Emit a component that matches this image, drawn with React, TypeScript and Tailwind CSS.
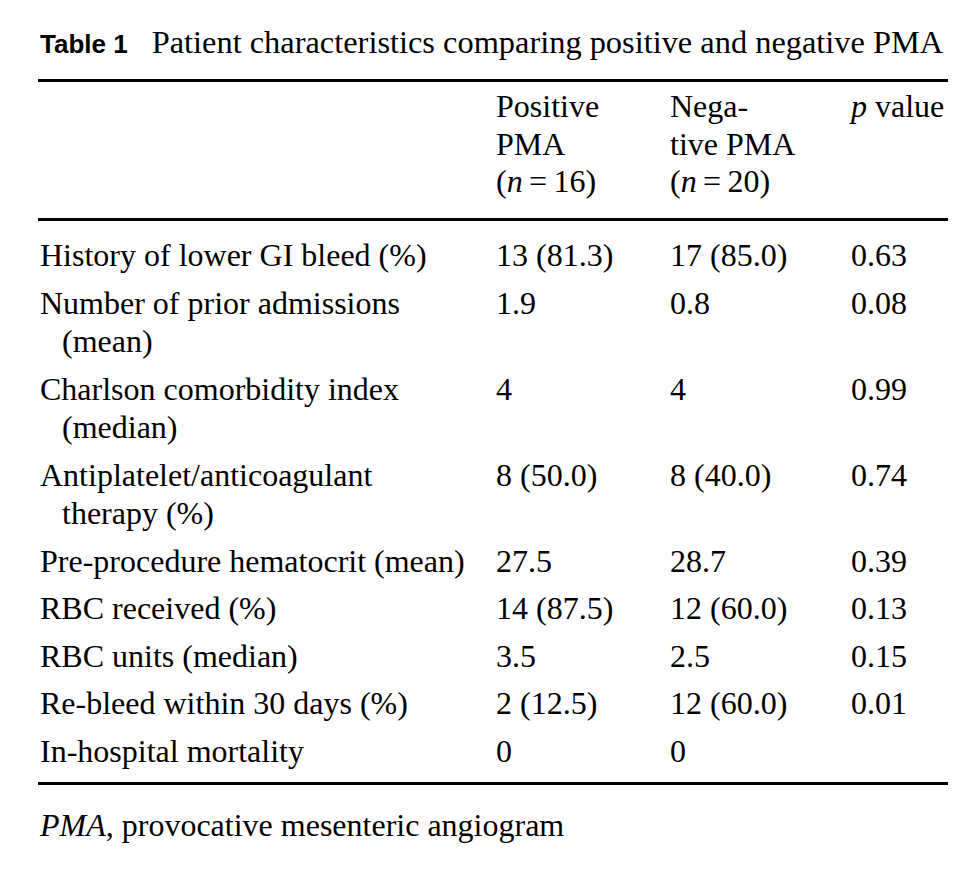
import React from "react";

type Row = { label: string; cont?: string; a: string; b: string; p: string };

const rows: Row[] = [
  { label: "History of lower GI bleed (%)", a: "13 (81.3)", b: "17 (85.0)", p: "0.63" },
  { label: "Number of prior admissions", cont: "(mean)", a: "1.9", b: "0.8", p: "0.08" },
  { label: "Charlson comorbidity index", cont: "(median)", a: "4", b: "4", p: "0.99" },
  { label: "Antiplatelet/anticoagulant", cont: "therapy (%)", a: "8 (50.0)", b: "8 (40.0)", p: "0.74" },
  { label: "Pre-procedure hematocrit (mean)", a: "27.5", b: "28.7", p: "0.39" },
  { label: "RBC received (%)", a: "14 (87.5)", b: "12 (60.0)", p: "0.13" },
  { label: "RBC units (median)", a: "3.5", b: "2.5", p: "0.15" },
  { label: "Re-bleed within 30 days (%)", a: "2 (12.5)", b: "12 (60.0)", p: "0.01" },
  { label: "In-hospital mortality", a: "0", b: "0", p: "" },
];

export default function App() {
  return (
    <div className="w-[980px] h-[872px] bg-white text-black font-['Liberation_Serif',serif] overflow-hidden">
      <div className="ml-[38px] w-[910px] pt-[22px]">
        {/* Title */}
        <div className="flex items-baseline leading-[40px] whitespace-nowrap">
          <span className="font-['Liberation_Sans',sans-serif] font-bold text-[26px] ml-[2px]">Table 1</span>
          <span className="text-[32.4px] ml-[24px]">
            Patient characteristics comparing positive and negative PMA
          </span>
        </div>

        {/* Top rule */}
        <div className="mt-[15px] h-[3px] bg-black" />

        {/* Header */}
        <div className="grid grid-cols-[458px_174px_181px_97px] text-[32px] leading-[37.5px] pt-[6px] pb-[17px]">
          <div />
          <div>
            Positive
            <br />
            PMA
            <br />(<i>n</i>&thinsp;=&thinsp;16)
          </div>
          <div>
            Nega-
            <br />
            tive PMA
            <br />(<i>n</i>&thinsp;=&thinsp;20)
          </div>
          <div className="whitespace-nowrap">
            <i>p</i> value
          </div>
        </div>

        {/* Header rule */}
        <div className="h-[3px] bg-black" />

        {/* Body */}
        <div className="pt-[11px] pb-[7px] text-[32px] leading-[38.5px]">
          {rows.map((r, i) => (
            <div key={i} className="grid grid-cols-[458px_174px_181px_97px] py-[4.5px]">
              <div className="pl-[2px]">
                <div className="whitespace-nowrap">{r.label}</div>
                {r.cont && <div className="pl-[22px] whitespace-nowrap">{r.cont}</div>}
              </div>
              <div className="whitespace-nowrap">{r.a}</div>
              <div className="whitespace-nowrap">{r.b}</div>
              <div className="whitespace-nowrap">{r.p}</div>
            </div>
          ))}
        </div>

        {/* Bottom rule */}
        <div className="h-[3px] bg-black" />

        {/* Footnote */}
        <div className="mt-[21px] text-[32px] leading-[38.5px] pl-[2px] whitespace-nowrap">
          <i>PMA</i>, provocative mesenteric angiogram
        </div>
      </div>
    </div>
  );
}
